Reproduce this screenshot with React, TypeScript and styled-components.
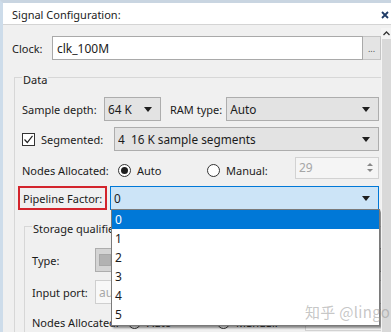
import React from "react";
import styled, { createGlobalStyle } from "styled-components";

const Global = createGlobalStyle`
  html, body { margin: 0; padding: 0; background: #f0f0f0; }
  body {
    font-family: "Noto Sans", "Noto Sans CJK SC", sans-serif;
    font-size: 11px;
    color: #1b1b1b;
  }
  * { box-sizing: border-box; }
`;

const Window = styled.div`
  position: relative;
  width: 391px;
  height: 332px;
  overflow: hidden;
  border-left: 3px solid #cddcea;
  border-top: 3px solid #c9d5e1;
  background: #f0f0f0;
  display: flex;
  flex-direction: column;
`;

const TitleBar = styled.div`
  flex: none;
  height: 22px;
  background: #ffffff;
  border-bottom: 1px solid #d4d4d4;
  display: flex;
  align-items: center;
  justify-content: space-between;
  padding: 2px 2px 0 9px;
  font-size: 11px;
  color: #222;
`;

const Body = styled.div`
  flex: 1;
  display: flex;
  min-height: 0;
`;

const Content = styled.div`
  flex: 1;
  min-width: 0;
  overflow: hidden;
  padding: 11px 0 0 9px;
  display: flex;
  flex-direction: column;
`;

const ScrollBar = styled.div`
  flex: none;
  width: 10px;
  margin-top: 3px;
  display: flex;
  flex-direction: column;
  background: #f4f4f4;
`;

const ScrollArrow = styled.div`
  height: 11px;
  display: flex;
  align-items: center;
  justify-content: center;
`;

const ScrollTrack = styled.div`
  flex: 1;
  background: #d9d9d9;
  margin: 0 0 0 1px;
`;

const Row = styled.div<{ $h?: number; $mt?: number }>`
  display: flex;
  align-items: center;
  height: ${(p) => p.$h ?? 24}px;
  margin-top: ${(p) => p.$mt ?? 0}px;
  flex: none;
`;

const Label = styled.span<{ $w?: number }>`
  flex: none;
  width: ${(p) => (p.$w ? `${p.$w}px` : "auto")};
  white-space: nowrap;
`;

const TextInput = styled.div`
  flex: 1;
  height: 24px;
  background: #fff;
  border: 1px solid #a9a9a9;
  display: flex;
  align-items: center;
  padding-left: 4px;
  font-size: 12px;
`;

const DotsButton = styled.div`
  flex: none;
  width: 18px;
  height: 24px;
  background: #e4e4e4;
  border: 1px solid #c4c4c4;
  border-left: none;
  display: flex;
  align-items: flex-end;
  justify-content: center;
  padding-bottom: 6px;
  font-size: 9px;
  color: #555;
  line-height: 1;
`;

const Group = styled.fieldset<{ $ml: number; $mr: number }>`
  margin: 0 ${(p) => p.$mr}px 0 ${(p) => p.$ml}px;
  padding: 0 7px 0 7px;
  border: 1px solid #d7d7d7;
  min-width: 0;
  display: flex;
  flex-direction: column;
`;

const Legend = styled.legend`
  padding: 5px 1px 0 1px;
  margin-left: 0;
  line-height: 14px;
  white-space: nowrap;
`;

const Combo = styled.div<{ $w?: number; $tone?: "normal" | "active" | "dark" }>`
  position: relative;
  flex: ${(p) => (p.$w ? "none" : "1")};
  width: ${(p) => (p.$w ? `${p.$w}px` : "auto")};
  height: 24px;
  display: flex;
  align-items: center;
  padding: 0 8px 0 3px;
  background: ${(p) =>
    p.$tone === "active" ? "#cce4f7" : p.$tone === "dark" ? "#d4d4d4" : "#e3e3e3"};
  border: 1px solid
    ${(p) => (p.$tone === "active" ? "#0078d7" : "#adadad")};
  font-size: 11.8px;
  white-space: nowrap;
`;

const ComboText = styled.span`
  flex: 1;
  overflow: hidden;
`;

const Arrow = styled.span`
  flex: none;
  width: 0;
  height: 0;
  border-left: 4px solid transparent;
  border-right: 4px solid transparent;
  border-top: 5px solid #1e1e1e;
`;

const CheckBox = styled.span`
  flex: none;
  width: 13px;
  height: 13px;
  border: 1px solid #333;
  background: #fff;
  display: flex;
  align-items: center;
  justify-content: center;
  margin-right: 6px;
`;

const RadioOption = styled.span<{ $w?: number }>`
  flex: none;
  display: flex;
  align-items: center;
  width: ${(p) => (p.$w ? `${p.$w}px` : "auto")};
`;

const Radio = styled.span<{ $on?: boolean }>`
  flex: none;
  width: 13px;
  height: 13px;
  border-radius: 50%;
  border: 1px solid #333;
  background: #fff;
  margin-right: 6px;
  display: flex;
  align-items: center;
  justify-content: center;
  &::after {
    content: "";
    width: 7px;
    height: 7px;
    border-radius: 50%;
    background: ${(p) => (p.$on ? "#1e1e1e" : "transparent")};
  }
`;

const SpinBox = styled.div<{ $w?: number }>`
  flex: ${(p) => (p.$w ? "none" : "1")};
  width: ${(p) => (p.$w ? `${p.$w}px` : "auto")};
  height: 22px;
  margin-top: -5px;
  background: #f5f5f5;
  border: 1px solid #d2d2d2;
  display: flex;
  align-items: center;
  padding: 0 3px 0 3px;
  color: #a6a6a6;
  font-size: 12px;
`;

const SpinArrows = styled.span`
  display: flex;
  flex-direction: column;
  gap: 3px;
  margin-right: 2px;
`;

const Tri = styled.span<{ $up?: boolean }>`
  width: 0;
  height: 0;
  border-left: 3px solid transparent;
  border-right: 3px solid transparent;
  ${(p) => (p.$up ? "border-bottom: 3px solid #888;" : "border-top: 3px solid #888;")}
`;

const Highlight = styled.span`
  flex: none;
  height: 24px;
  width: 89px;
  margin-left: -4px;
  margin-right: 3px;
  border: 2px solid #d3242c;
  padding-left: 3px;
  display: flex;
  align-items: center;
  white-space: nowrap;
`;

const Popup = styled.div`
  position: absolute;
  top: 100%;
  left: 0;
  width: 269px;
  z-index: 10;
  background: #fff;
  border: 1px solid #7a7a7a;
  box-shadow: 2px 2px 2px rgba(0, 0, 0, 0.45);
  padding-bottom: 1px;
`;

const Item = styled.div<{ $sel?: boolean }>`
  height: 19px;
  display: flex;
  align-items: center;
  padding-left: 3px;
  font-size: 12px;
  background: ${(p) => (p.$sel ? "#0078d7" : "transparent")};
  color: ${(p) => (p.$sel ? "#fff" : "#1b1b1b")};
`;

const PatternBox = styled.span`
  width: 12px;
  height: 12px;
  background-image: radial-gradient(#8a8a8a 0.6px, transparent 0.8px);
  background-size: 2px 2px;
  border: 1px solid #a8a8a8;
`;

const GreyInput = styled.div`
  flex: 1;
  height: 24px;
  background: #f8f8f8;
  border: 1px solid #cfcfcf;
  display: flex;
  align-items: center;
  padding-left: 3px;
  color: #a8a8a8;
  font-size: 12px;
`;

const Watermark = styled.div`
  position: absolute;
  left: 302px;
  top: 298px;
  font-family: "Noto Sans CJK SC", "Noto Sans", sans-serif;
  font-size: 15px;
  color: rgba(150, 150, 150, 0.55);
  white-space: nowrap;
  letter-spacing: 0.3px;
  z-index: 20;
`;

const items = ["0", "1", "2", "3", "4", "5"];

export default function App() {
  return (
    <>
      <Global />
      <Window>
        <TitleBar>
          <span>Signal Configuration:</span>
          <svg width="8" height="8" viewBox="0 0 8 8">
            <path d="M1 1 L7 7 M7 1 L1 7" stroke="#1f3b66" strokeWidth="1.8" />
          </svg>
        </TitleBar>
        <Body>
          <Content>
            <Row>
              <Label $w={40}>Clock:</Label>
              <TextInput>clk_100M</TextInput>
              <DotsButton>...</DotsButton>
            </Row>
            <Row $h={8} />
            <Group $ml={2} $mr={-6}>
              <Legend>Data</Legend>
              <Row $mt={10}>
                <Label $w={82}>Sample depth:</Label>
                <Combo $w={57}>
                  <ComboText>64 K</ComboText>
                  <Arrow />
                </Combo>
                <Label style={{ marginLeft: 9, marginRight: 4 }}>RAM type:</Label>
                <Combo>
                  <ComboText>Auto</ComboText>
                  <Arrow />
                </Combo>
              </Row>
              <Row $mt={6}>
                <CheckBox>
                  <svg width="11" height="11" viewBox="0 0 11 11">
                    <path d="M1.5 5.5 L4.3 8.5 L9.5 1.8" fill="none" stroke="#222" strokeWidth="1.2" />
                  </svg>
                </CheckBox>
                <Label $w={73}>Segmented:</Label>
                <Combo>
                  <ComboText>4&nbsp;&nbsp;16 K sample segments</ComboText>
                  <Arrow />
                </Combo>
              </Row>
              <Row $mt={6} $h={26}>
                <Label $w={96}>Nodes Allocated:</Label>
                <RadioOption $w={89}>
                  <Radio $on />
                  <span>Auto</span>
                </RadioOption>
                <RadioOption $w={88}>
                  <Radio />
                  <span>Manual:</span>
                </RadioOption>
                <SpinBox>
                  <ComboText>29</ComboText>
                  <SpinArrows>
                    <Tri $up />
                    <Tri />
                  </SpinArrows>
                </SpinBox>
              </Row>
              <Row $mt={3}>
                <Highlight>Pipeline Factor:</Highlight>
                <Combo $tone="active">
                  <ComboText>0</ComboText>
                  <Arrow />
                  <Popup>
                    {items.map((it, i) => (
                      <Item key={it} $sel={i === 0}>
                        {it}
                      </Item>
                    ))}
                  </Popup>
                </Combo>
              </Row>
              <Row $h={7} />
              <Group $ml={2} $mr={-12}>
                <Legend>Storage qualifier</Legend>
                <Row $mt={12}>
                  <Label $w={63}>Type:</Label>
                  <Combo $tone="dark">
                    <PatternBox />
                    <ComboText />
                    <Arrow />
                  </Combo>
                </Row>
                <Row $mt={8}>
                  <Label $w={63}>Input port:</Label>
                  <GreyInput>auto</GreyInput>
                </Row>
                <Row $mt={6}>
                  <Label $w={96}>Nodes Allocated:</Label>
                  <RadioOption $w={89}>
                    <Radio $on />
                    <span>Auto</span>
                  </RadioOption>
                  <RadioOption $w={88}>
                    <Radio />
                    <span>Manual:</span>
                  </RadioOption>
                  <SpinBox>
                    <ComboText>25</ComboText>
                  </SpinBox>
                </Row>
              </Group>
            </Group>
          </Content>
          <ScrollBar>
            <ScrollArrow>
              <svg width="7" height="5" viewBox="0 0 7 5">
                <path d="M0.5 4 L3.5 1 L6.5 4" fill="none" stroke="#333" strokeWidth="1.3" />
              </svg>
            </ScrollArrow>
            <ScrollTrack />
          </ScrollBar>
        </Body>
        <Watermark>知乎 @lingo</Watermark>
      </Window>
    </>
  );
}
